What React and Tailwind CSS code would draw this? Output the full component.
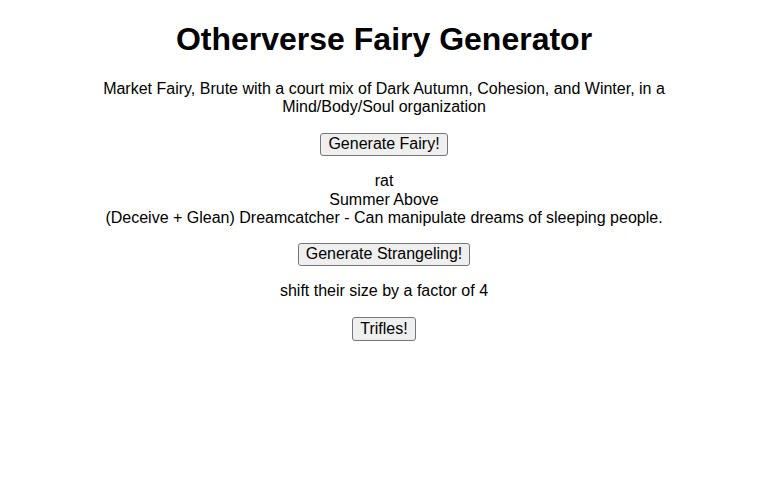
export default function App() {
  const btn =
    "bg-[#efefef] border border-[#767676] rounded-[3px] px-[7px] py-[1.5px] text-[16px] leading-[18.4px] text-black hover:bg-[#e5e5e5]";
  return (
    <div className="min-h-[480px] bg-white text-center text-black font-['Liberation_Sans',Arial,sans-serif] text-[16px] leading-[18.4px]">
      <h1 className="pt-[21.44px] mb-[21.44px] text-[32px] leading-[37px] font-bold">
        Otherverse Fairy Generator
      </h1>
      <div className="px-[100px]">
        <p>
          Market Fairy, Brute with a court mix of Dark Autumn, Cohesion, and Winter, in a
          Mind/Body/Soul organization
        </p>
      </div>
      <div className="mt-[16px] flex justify-center">
        <button className={btn}>Generate Fairy!</button>
      </div>
      <div className="mt-[16px]">
        <p>rat</p>
        <p>Summer Above</p>
        <p>(Deceive + Glean) Dreamcatcher - Can manipulate dreams of sleeping people.</p>
      </div>
      <div className="mt-[15.4px] flex justify-center">
        <button className={btn}>Generate Strangeling!</button>
      </div>
      <p className="mt-[16px]">shift their size by a factor of 4</p>
      <div className="mt-[16.6px] flex justify-center">
        <button className={btn}>Trifles!</button>
      </div>
    </div>
  );
}
